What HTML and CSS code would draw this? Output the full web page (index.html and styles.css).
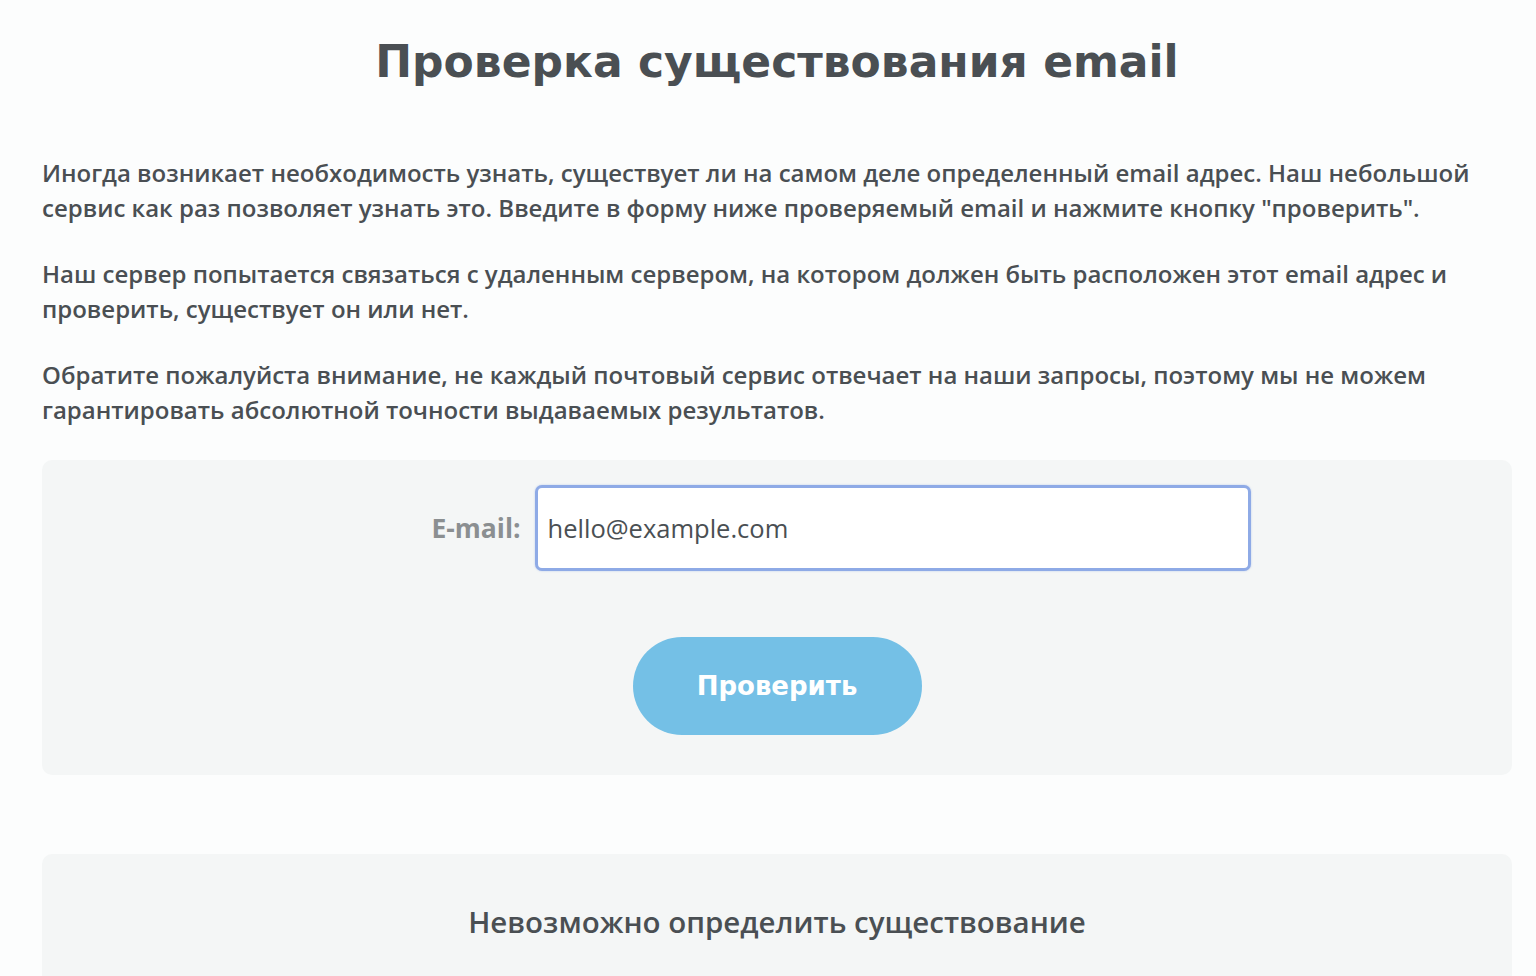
FILE: index.html
```html
<!DOCTYPE html>
<html lang="ru">
<head>
<meta charset="utf-8">
<title>Проверка существования email</title>
<link rel="stylesheet" href="styles.css">
</head>
<body>
<main class="page">
  <h1 class="title">Проверка существования email</h1>
  <div class="intro">
    <p>Иногда возникает необходимость узнать, существует ли на самом деле определенный email адрес. Наш небольшой сервис как раз позволяет узнать это. Введите в форму ниже проверяемый email и нажмите кнопку "проверить".</p>
    <p>Наш сервер попытается связаться с удаленным сервером, на котором должен быть расположен этот email адрес и проверить, существует он или нет.</p>
    <p>Обратите пожалуйста внимание, не каждый почтовый сервис отвечает на наши запросы, поэтому мы не можем гарантировать абсолютной точности выдаваемых результатов.</p>
  </div>
  <form class="panel form-panel">
    <div class="field">
      <label class="label" for="email">E-mail:</label>
      <input class="input" id="email" type="text" value="hello@example.com">
    </div>
    <button class="btn" type="button">Проверить</button>
  </form>
  <section class="panel result">
    <h2 class="result-text">Невозможно определить существование</h2>
  </section>
</main>
</body>
</html>
```
FILE: styles.css
```css
html, body {
  margin: 0;
  padding: 0;
  background: #fcfdfd;
}
body {
  font-family: "Open Sans", "Liberation Sans", sans-serif;
  color: #4a4f53;
}
.page {
  padding: 0 24px 0 42px;
  display: flex;
  flex-direction: column;
}
.title {
  margin: 30px 0 0;
  text-align: center;
  font-family: "DejaVu Sans", "Open Sans", sans-serif;
  font-weight: 700;
  font-size: 44px;
  line-height: 64px;
  color: #4a4f53;
}
.intro {
  margin-top: 61px;
}
.intro p {
  margin: 0 0 31px;
  font-size: 24px;
  font-weight: 600;
  line-height: 35px;
}
.panel {
  background: #f4f6f6;
  border-radius: 10px;
}
.form-panel {
  margin-top: 2px;
  height: 315px;
  box-sizing: border-box;
  padding-top: 25px;
  display: flex;
  flex-direction: column;
  align-items: center;
}
.field {
  display: flex;
  align-items: center;
  gap: 14px;
  margin-left: 128px;
}
.label {
  font-size: 26.5px;
  font-weight: 700;
  color: #8b8f91;
}
.input {
  width: 716px;
  height: 86px;
  box-sizing: border-box;
  border: 3px solid #8eaae6;
  border-radius: 7px;
  background: #fff;
  padding: 0 10px;
  font-family: "Open Sans", sans-serif;
  font-size: 25.5px;
  color: #4a4f53;
  outline: none;
  box-shadow: 0 0 2px rgba(142, 170, 230, 0.6);
}
.btn {
  margin-top: 66px;
  width: 289px;
  height: 98px;
  border: none;
  border-radius: 49px;
  background: #74c0e6;
  color: #fff;
  font-family: "DejaVu Sans", sans-serif;
  font-weight: 700;
  font-size: 26px;
}
.result {
  margin-top: 79px;
  height: 140px;
  display: flex;
  justify-content: center;
}
.result-text {
  margin: 46px 0 0;
  font-size: 29.5px;
  font-weight: 600;
  line-height: 44px;
  color: #4a4f53;
}
```
